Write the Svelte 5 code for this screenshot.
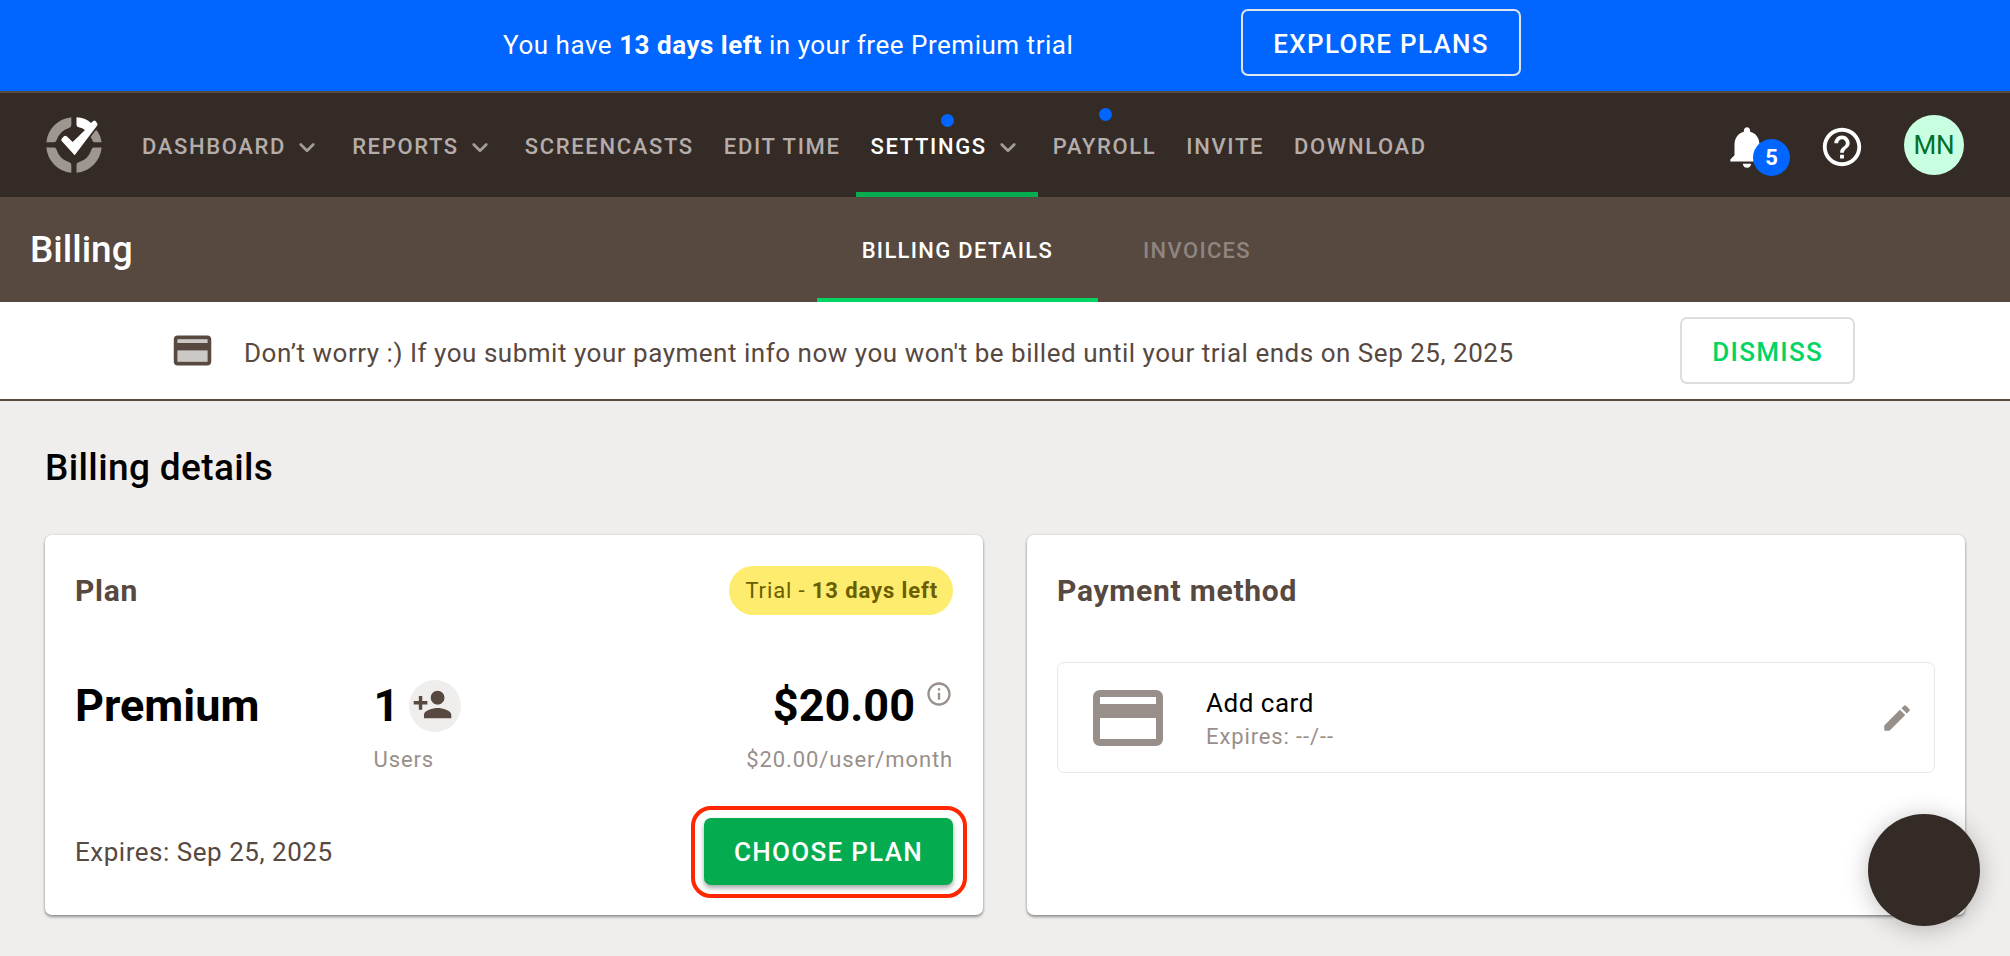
<script>
  const navItems = [
    { label: 'Dashboard', menu: true },
    { label: 'Reports', menu: true },
    { label: 'Screencasts' },
    { label: 'Edit time' },
    { label: 'Settings', menu: true, active: true, dot: 'low' },
    { label: 'Payroll', dot: 'high' },
    { label: 'Invite' },
    { label: 'Download' }
  ];
  const tabs = [
    { label: 'Billing details', active: true },
    { label: 'Invoices', active: false }
  ];
</script>

<div class="banner">
  <p>You have <strong>13 days left</strong> in your free Premium trial</p>
  <button class="btn outline-light">Explore plans</button>
</div>

<header class="topbar">
  <a class="logo" href="#home" aria-label="Home">
    <svg viewBox="50 37 168 168" width="56" height="56">
      <g fill="#9d9691">
        <path d="M126 37.500A84 84 0 0 0 51 113H74Q80 113 81.500 107A58 58 0 0 1 120 69Q126 67 126 62Z" />
        <path d="M126 204.500A84 84 0 0 1 51 128.500H74Q80 128.500 81.500 134.500A58 58 0 0 0 120 173Q126 175 126 180Z" />
        <path d="M141.500 204.500A84 84 0 0 0 217 128.500H194Q188 128.500 186.500 134.500A58 58 0 0 1 148 173Q141.500 175 141.500 180Z" />
        <path d="M217 113H197Q191 113 189.500 108Q188 103 184 97L197 79Q201 74 204 79Q215 94 217 113Z" />
      </g>
      <path fill="#fff" d="M141.500 37.500Q167 38 185 55L192 49Q196 46 199 50L203 55Q206 59 203 63L136 152L97 109Q94 105 98 101L104 95Q108 92 112 95L130 112L167 76Q160 70 148 68Q141.500 66 141.500 60Z" />
    </svg>
  </a>
  <nav>
    {#each navItems as item}
      <a href="#nav" class="nav-item" class:active={item.active}>
        {item.label}
        {#if item.menu}
          <svg class="chev" viewBox="0 0 24 24" width="30" height="30"><path d="M7 10l5 5 5-5" fill="none" stroke="#a39c98" stroke-width="2.200" stroke-linecap="round" stroke-linejoin="round" /></svg>
        {/if}
        {#if item.dot}<span class="dot {item.dot}"></span>{/if}
      </a>
    {/each}
  </nav>
  <div class="tools">
    <button class="icon-btn bell" aria-label="Notifications">
      <svg viewBox="0 0 24 24" width="50" height="50" fill="#fff"><path d="M12 22c1.100 0 2-.9 2-2h-4c0 1.100.9 2 2 2zm6-6v-5c0-3.070-1.640-5.640-4.500-6.320V4c0-.83-.67-1.500-1.500-1.500s-1.500.67-1.500 1.500v.68C7.630 5.360 6 7.920 6 11v5l-2 2v1h16v-1l-2-2z" /></svg>
      <span class="count">5</span>
    </button>
    <button class="icon-btn" aria-label="Help">
      <svg viewBox="0 0 24 24" width="46" height="46" fill="#fff"><path d="M11 18h2v-2h-2v2zm1-16C6.480 2 2 6.480 2 12s4.480 10 10 10 10-4.480 10-10S17.520 2 12 2zm0 18c-4.410 0-8-3.590-8-8s3.590-8 8-8 8 3.590 8 8-3.590 8-8 8zm0-14c-2.210 0-4 1.790-4 4h2c0-1.100.9-2 2-2s2 .9 2 2c0 2-3 1.750-3 5h2c0-2.250 3-2.500 3-5 0-2.210-1.790-4-4-4z" /></svg>
    </button>
  </div>
  <button class="avatar">MN</button>
</header>

<div class="subbar">
  <h1>Billing</h1>
  <div class="tabs">
    {#each tabs as tab}
      <a href="#tab" class="tab" class:active={tab.active}>{tab.label}</a>
    {/each}
  </div>
</div>

<div class="notice">
  <svg viewBox="0 0 24 24" width="45" height="45" fill="#574840"><path opacity=".3" d="M4 12h16v6H4zM4 6h16v2H4z" /><path d="M20 4H4c-1.110 0-1.990.89-1.990 2L2 18c0 1.110.89 2 2 2h16c1.110 0 2-.89 2-2V6c0-1.110-.89-2-2-2zm0 14H4v-6h16v6zm0-10H4V6h16v2z" /></svg>
  <p>Don’t worry :) If you submit your payment info now you won't be billed until your trial ends on Sep 25, 2025</p>
  <button class="btn outline">Dismiss</button>
</div>

<main>
  <h2>Billing details</h2>
  <div class="cards">
    <section class="card">
      <div class="card-head">
        <h3>Plan</h3>
        <span class="pill">Trial - <strong>13 days left</strong></span>
      </div>
      <div class="plan">
        <div class="big">Premium</div>
        <div>
          <div class="big">
            1
            <button class="add-user" aria-label="Add user">
              <svg viewBox="0 0 24 24" width="41" height="41" fill="#574840"><path d="M15 12c2.210 0 4-1.790 4-4s-1.790-4-4-4-4 1.790-4 4 1.790 4 4 4zm-9-2V7H4v3H1v2h3v3h2v-3h3v-2H6zm9 4c-2.670 0-8 1.340-8 4v2h16v-2c0-2.660-5.330-4-8-4z" /></svg>
            </button>
          </div>
          <div class="sub">Users</div>
        </div>
        <div class="price">
          <div class="big">
            $20.00
            <svg class="info" viewBox="0 0 24 24" width="28" height="28" fill="#998f8a"><path d="M11 7h2v2h-2zm0 4h2v6h-2zm1-9C6.480 2 2 6.480 2 12s4.480 10 10 10 10-4.480 10-10S17.520 2 12 2zm0 18c-4.410 0-8-3.590-8-8s3.590-8 8-8 8 3.590 8 8-3.590 8-8 8z" /></svg>
          </div>
          <div class="sub">$20.00/user/month</div>
        </div>
      </div>
      <div class="card-foot">
        <p>Expires: Sep 25, 2025</p>
        <div class="highlight"><button class="btn solid">Choose plan</button></div>
      </div>
    </section>

    <section class="card">
      <div class="card-head"><h3>Payment method</h3></div>
      <div class="method">
        <svg viewBox="0 0 24 24" width="84" height="84" fill="#998f8a"><path d="M20 4H4c-1.110 0-1.990.89-1.990 2L2 18c0 1.110.89 2 2 2h16c1.110 0 2-.89 2-2V6c0-1.110-.89-2-2-2zm0 14H4v-6h16v6zm0-10H4V6h16v2z" /></svg>
        <div class="method-text">
          <div class="method-name">Add card</div>
          <div class="sub">Expires: --/--</div>
        </div>
        <button class="icon-btn" aria-label="Edit card">
          <svg viewBox="0 0 24 24" width="34" height="34" fill="#998f8a"><path d="M3 17.460v3.040c0 .28.22.5.5.5h3.040c.13 0 .26-.05.35-.15L17.810 9.940l-3.750-3.750L3.150 17.100c-.1.100-.15.220-.15.360zM20.710 7.040a1 1 0 0 0 0-1.410l-2.340-2.340a1 1 0 0 0-1.410 0l-1.830 1.830 3.750 3.750 1.830-1.830z" /></svg>
        </button>
      </div>
    </section>
  </div>
</main>

<button class="fab" aria-label="Open chat"></button>

<style>
  :global(body) {
    margin: 0;
    background: #f0eeec;
    color: #574840;
    font: 400 26px/32px Roboto, sans-serif;
    letter-spacing: 0.02em;
  }
  p, h1, h2, h3 { margin: 0; }
  a { text-decoration: none; }
  svg { display: block; flex: none; }
  button {
    font: inherit;
    border: 0;
    background: none;
    padding: 0;
    cursor: pointer;
  }
  strong { font-weight: 700; }

  .btn {
    box-sizing: border-box;
    height: 67px;
    padding: 3px 30px 0;
    border: 2px solid transparent;
    border-radius: 7px;
    font-weight: 500;
    letter-spacing: 0.05em;
    text-transform: uppercase;
    white-space: nowrap;
  }
  .outline-light { border-color: #dfe6f0; color: #fff; }
  .outline { border-color: #dddcde; color: #00d563; }
  .solid {
    padding: 0 30px;
    border: 0;
    background: #04ac4f;
    color: #fff;
    box-shadow: 0 3px 5px rgba(0, 0, 0, 0.35);
  }

  .banner {
    display: flex;
    align-items: center;
    justify-content: center;
    gap: 168px;
    min-height: 85px;
    padding: 0 0 6px 14px;
    background: #0066ff;
    color: #fff;
  }
  .banner p { padding-top: 5px; }

  .topbar {
    display: flex;
    align-items: stretch;
    min-height: 104px;
    padding: 0 46px;
    border-top: 2px solid #574840;
    background: #342a26;
  }
  .logo { display: flex; align-items: center; margin-right: 25px; }
  nav { display: flex; flex: 1; }
  .nav-item {
    position: relative;
    display: flex;
    align-items: center;
    gap: 6px;
    padding: 3px 15px 0;
    color: #b4adaa;
    font-size: 22px;
    font-weight: 500;
    letter-spacing: 0.075em;
    text-transform: uppercase;
    white-space: nowrap;
  }
  .nav-item.active { color: #fff; box-shadow: inset 0 -5px #04ac4f; }
  .dot {
    position: absolute;
    left: calc(50% - 6px);
    width: 13px;
    height: 13px;
    border-radius: 50%;
    background: #0066ff;
  }
  .dot.low { top: 21px; }
  .dot.high { top: 15px; }
  .tools {
    display: flex;
    align-items: center;
    gap: 47px;
    margin-right: 39px;
    padding-top: 4px;
  }
  .icon-btn { position: relative; }
  .count {
    position: absolute;
    left: 31px;
    top: 17px;
    width: 37px;
    height: 37px;
    border-radius: 50%;
    background: #0066ff;
    color: #fff;
    font-size: 22px;
    font-weight: 700;
    line-height: 37px;
    letter-spacing: 0;
    text-align: center;
  }
  .avatar {
    align-self: center;
    width: 60px;
    height: 60px;
    border-radius: 50%;
    background: #c8ffe0;
    color: #00702e;
    letter-spacing: 0;
    text-align: center;
  }

  .subbar {
    display: flex;
    align-items: stretch;
    min-height: 105px;
    padding: 0 30px;
    background: #574840;
  }
  h1 {
    align-self: center;
    color: #fff;
    font-size: 37px;
    font-weight: 500;
    line-height: 44px;
    letter-spacing: 0;
  }
  .tabs { display: flex; flex: 1; justify-content: center; }
  .tab {
    display: flex;
    align-items: center;
    padding: 2px 45px 0;
    color: #8e8580;
    font-size: 22px;
    font-weight: 500;
    letter-spacing: 0.06em;
    text-transform: uppercase;
  }
  .tab.active { color: #fff; box-shadow: inset 0 -4px #00d563; }

  .notice {
    display: flex;
    align-items: center;
    min-height: 97px;
    padding: 0 155px 0 170px;
    border-bottom: 2px solid #574840;
    background: #fff;
  }
  .notice p { flex: 1; margin-left: 29px; padding-top: 4px; }

  main { padding: 45px; }
  h2 {
    color: #000;
    font-size: 37px;
    font-weight: 500;
    line-height: 44px;
    letter-spacing: 0.01em;
  }
  .cards {
    display: grid;
    grid-template-columns: 1fr 1fr;
    gap: 44px;
    margin-top: 45px;
  }
  .card {
    padding: 31px 30px 30px;
    border-radius: 7px;
    background: #fff;
    box-shadow: 0 2px 3px rgba(0, 0, 0, 0.38), 0 0 3px rgba(0, 0, 0, 0.12);
  }
  .card-head {
    display: flex;
    align-items: center;
    justify-content: space-between;
    min-height: 49px;
  }
  h3 { font-size: 30px; font-weight: 700; line-height: 36px; letter-spacing: 0.025em; }
  .pill {
    padding: 0 15px 0 16px;
    border-radius: 25px;
    background: #fdec6d;
    color: #6b5e00;
    font-size: 22px;
    line-height: 49px;
    letter-spacing: 0.04em;
  }
  .plan {
    display: grid;
    grid-template-columns: 34% 1fr auto;
    margin-top: 65px;
  }
  .big {
    display: flex;
    align-items: center;
    gap: 10px;
    height: 52px;
    color: #000;
    font-size: 45px;
    font-weight: 700;
    letter-spacing: 0;
  }
  .add-user {
    width: 52px;
    height: 52px;
    padding: 0 3px 4px;
    border-radius: 50%;
    background: #f0eeec;
  }
  .price .big { justify-content: flex-end; }
  .info { align-self: flex-start; }
  .sub {
    color: #998f8a;
    font-size: 22px;
    line-height: 30px;
    letter-spacing: 0.04em;
  }
  .plan .sub { margin-top: 13px; }
  .card-foot {
    display: flex;
    align-items: center;
    justify-content: space-between;
    margin-top: 43px;
  }
  .highlight { position: relative; display: flex; }
  .highlight::after {
    content: '';
    position: absolute;
    inset: -12px -14px -13px -13px;
    border: 4px solid #ff2600;
    border-radius: 20px;
    pointer-events: none;
  }
  .method {
    display: flex;
    align-items: center;
    min-height: 109px;
    margin-top: 47px;
    padding: 0 20px 0 28px;
    border: 1px solid #e9e7e6;
    border-radius: 7px;
  }
  .method svg { margin: -8px 0; }
  .method-text { flex: 1; margin-left: 36px; padding-top: 1px; }
  .method-name { color: #000; line-height: 36px; }
  .method .sub { margin-top: 1px; }

  .fab {
    position: fixed;
    right: 30px;
    bottom: 30px;
    width: 112px;
    height: 112px;
    border-radius: 50%;
    background: #342a26;
    box-shadow: 0 3px 24px rgba(0, 0, 0, 0.25);
  }
</style>
